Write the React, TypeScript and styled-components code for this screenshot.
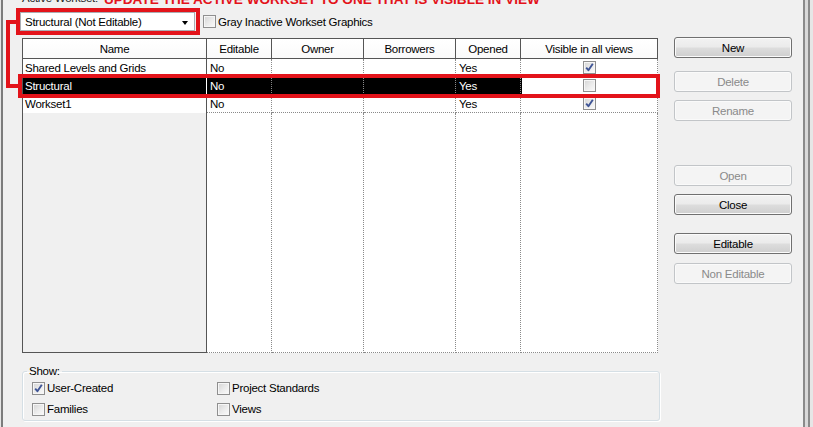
import React from "react";
import styled, { createGlobalStyle } from "styled-components";

const GlobalStyle = createGlobalStyle`
  html, body {
    margin: 0;
    padding: 0;
    background: #f0f0f0;
    overflow: hidden;
  }
  * {
    box-sizing: border-box;
  }
`;

const RED = "#e3131a";

const Screen = styled.div`
  position: relative;
  width: 813px;
  height: 427px;
  overflow: hidden;
  display: flex;
  padding: 0 3px 0 1px;
  background: #e6e6e6;
  font-family: "Liberation Sans", Arial, sans-serif;
  font-size: 11.5px;
  letter-spacing: -0.25px;
  color: #000;
`;

const Frame = styled.div`
  flex: 1;
  display: flex;
  border-right: 2px solid #8a8a8a;
  padding-right: 3px;
  background: #d9d9d9;
`;

const Dialog = styled.div`
  flex: 1;
  display: flex;
  align-items: flex-start;
  gap: 14px;
  padding-left: 19px;
  background: #f0f0f0;
  border-left: 2px solid #7c7c7c;
  border-right: 2px solid #8a8a8a;
`;

const MainColumn = styled.div`
  width: 638px;
  display: flex;
  flex-direction: column;
`;

const TopRow = styled.div`
  display: flex;
  align-items: flex-end;
  gap: 6px;
  height: 14px;
  margin-top: -7px;
`;

const FieldLabel = styled.span`
  line-height: 14px;
  margin-bottom: 2px;
  color: #222;
`;

const Callout = styled.span`
  font-size: 13.6px;
  font-weight: bold;
  letter-spacing: 0;
  line-height: 14px;
  color: ${RED};
  white-space: nowrap;
`;

const ComboRow = styled.div`
  display: flex;
  align-items: center;
  height: 19px;
  margin-top: 5px;
`;

const Combo = styled.div`
  width: 175px;
  height: 19px;
  margin-left: -2px;
  display: flex;
  align-items: center;
  justify-content: space-between;
  padding: 0 6px 0 4px;
  background: #fff;
  border: 1px solid #abadb3;
`;

const Arrow = styled.span`
  width: 0;
  height: 0;
  margin-top: 2px;
  border-left: 3.5px solid transparent;
  border-right: 3.5px solid transparent;
  border-top: 4px solid #000;
`;

const CheckLabel = styled.label<{ $indent?: number }>`
  display: flex;
  align-items: center;
  gap: 2px;
  margin-left: ${(p) => p.$indent ?? 0}px;
  white-space: nowrap;
  line-height: 16px;
`;

const Box = styled.span`
  flex: none;
  width: 13px;
  height: 13px;
  display: inline-flex;
  align-items: center;
  justify-content: center;
  border: 1px solid #8f8f8f;
  background: linear-gradient(135deg, #d4d4d4 0%, #ececec 55%, #fbfbfb 100%);
  box-shadow: inset 0 0 0 1px #f6f6f6;
`;

const CheckBox: React.FC<{ checked?: boolean }> = ({ checked }) => (
  <Box>
    {checked && (
      <svg width="11" height="11" viewBox="0 0 11 11">
        <path
          d="M2.2 5.6 L4.4 8.2 L8.8 1.8"
          fill="none"
          stroke="#3f5596"
          strokeWidth="1.9"
          strokeLinejoin="round"
        />
      </svg>
    )}
  </Box>
);

const Table = styled.div`
  margin-top: 7px;
  width: 636px;
  height: 315px;
  display: grid;
  grid-template-columns: 184px 65px 92px 92px 65px 137px;
  grid-template-rows: 20px repeat(3, 18px) 1fr;
  border-top: 1px solid #555;
  border-left: 1px solid #555;
`;

const HeaderCell = styled.div`
  display: flex;
  align-items: center;
  justify-content: center;
  background: linear-gradient(#ffffff, #fafafa);
  border-right: 1px solid #555;
  border-bottom: 1px solid #555;
`;

const NameCell = styled.div<{ $selected?: boolean }>`
  display: flex;
  align-items: center;
  padding-left: 2px;
  white-space: nowrap;
  background: ${(p) => (p.$selected ? "#000" : "#fff")};
  color: ${(p) => (p.$selected ? "#fff" : "#000")};
  border-right: 1px solid ${(p) => (p.$selected ? "#fff" : "#555")};
`;

const Cell = styled.div<{ $selected?: boolean; $focus?: boolean; $center?: boolean }>`
  display: flex;
  align-items: center;
  justify-content: ${(p) => (p.$center ? "center" : "flex-start")};
  padding-left: ${(p) => (p.$center ? 0 : 3)}px;
  background: ${(p) => (p.$selected ? "#000" : "#fff")};
  color: ${(p) => (p.$selected ? "#fff" : "#000")};
  border-right: 1px dotted #8a8a8a;
  border-bottom: 1px dotted #8a8a8a;
  outline: ${(p) => (p.$focus ? "1px solid #000" : "none")};
  outline-offset: -1px;
`;

const NameFiller = styled.div`
  background: #f0f0f0;
  border-right: 1px solid #555;
  border-bottom: 1px solid #555;
`;

const Filler = styled.div`
  background: #fff;
  border-right: 1px dotted #8a8a8a;
  border-bottom: 1px dotted #8a8a8a;
`;

const GroupBox = styled.fieldset`
  margin: 11px 0 0 0;
  padding: 0 0 3px 4px;
  width: 638px;
  border: 1px solid #d5dfe5;
  border-radius: 3px;
  box-shadow: inset 1px 1px 0 #fff, 1px 1px 0 #fff;
`;

const Legend = styled.legend`
  padding: 0 2px;
  line-height: 14px;
`;

const Options = styled.div`
  display: grid;
  grid-template-columns: 185px 1fr;
  grid-auto-rows: 16px;
  row-gap: 5px;
  margin-top: 2px;
  padding-left: 5px;
`;

const ButtonColumn = styled.div`
  width: 118px;
  display: flex;
  flex-direction: column;
  padding-top: 37px;
`;

const Button = styled.button<{ $gap?: number }>`
  height: 21px;
  margin-top: ${(p) => p.$gap ?? 0}px;
  font-family: inherit;
  font-size: 11.5px;
  letter-spacing: -0.25px;
  color: #000;
  border: 1px solid #707070;
  border-radius: 3px;
  background: linear-gradient(#f2f2f2 0%, #ebebeb 48%, #dddddd 52%, #cfcfcf 100%);
  box-shadow: inset 0 0 0 1px #fbfbfb;
  padding: 0;

  &:disabled {
    color: #8a8a8a;
    border-color: #c2c5c8;
    background: #f4f4f4;
    box-shadow: inset 0 0 0 1px #fafafa;
  }
`;

const Annotations = styled.svg`
  position: absolute;
  left: 0;
  top: 0;
  pointer-events: none;
`;

type Workset = {
  name: string;
  editable: string;
  opened: string;
  visible: boolean;
  selected?: boolean;
};

const worksets: Workset[] = [
  { name: "Shared Levels and Grids", editable: "No", opened: "Yes", visible: true },
  { name: "Structural", editable: "No", opened: "Yes", visible: false, selected: true },
  { name: "Workset1", editable: "No", opened: "Yes", visible: true },
];

const columns = ["Name", "Editable", "Owner", "Borrowers", "Opened", "Visible in all views"];

export default function App() {
  return (
    <>
      <GlobalStyle />
      <Screen>
        <Frame>
          <Dialog>
            <MainColumn>
              <TopRow>
                <FieldLabel>Active Workset:</FieldLabel>
                <Callout>UPDATE THE ACTIVE WORKSET TO ONE THAT IS VISIBLE IN VIEW</Callout>
              </TopRow>
              <ComboRow>
                <Combo>
                  <span>Structural (Not Editable)</span>
                  <Arrow />
                </Combo>
                <CheckLabel $indent={8}>
                  <CheckBox />
                  Gray Inactive Workset Graphics
                </CheckLabel>
              </ComboRow>

              <Table>
                {columns.map((c) => (
                  <HeaderCell key={c}>{c}</HeaderCell>
                ))}
                {worksets.map((w) => (
                  <React.Fragment key={w.name}>
                    <NameCell $selected={w.selected}>{w.name}</NameCell>
                    <Cell $selected={w.selected}>{w.editable}</Cell>
                    <Cell $selected={w.selected} />
                    <Cell $selected={w.selected} />
                    <Cell $selected={w.selected}>{w.opened}</Cell>
                    <Cell $center $focus={w.selected}>
                      <CheckBox checked={w.visible} />
                    </Cell>
                  </React.Fragment>
                ))}
                <NameFiller />
                <Filler />
                <Filler />
                <Filler />
                <Filler />
                <Filler />
              </Table>

              <GroupBox>
                <Legend>Show:</Legend>
                <Options>
                  <CheckLabel>
                    <CheckBox checked />
                    User-Created
                  </CheckLabel>
                  <CheckLabel>
                    <CheckBox />
                    Project Standards
                  </CheckLabel>
                  <CheckLabel>
                    <CheckBox />
                    Families
                  </CheckLabel>
                  <CheckLabel>
                    <CheckBox />
                    Views
                  </CheckLabel>
                </Options>
              </GroupBox>
            </MainColumn>

            <ButtonColumn>
              <Button>New</Button>
              <Button $gap={13} disabled>
                Delete
              </Button>
              <Button $gap={8} disabled>
                Rename
              </Button>
              <Button $gap={44} disabled>
                Open
              </Button>
              <Button $gap={8}>Close</Button>
              <Button $gap={18}>Editable</Button>
              <Button $gap={9} disabled>
                Non Editable
              </Button>
            </ButtonColumn>
          </Dialog>
        </Frame>

        {/* red markup drawn over the dialog */}
        <Annotations width="813" height="427" viewBox="0 0 813 427">
          <g fill="none" stroke={RED} strokeWidth="4" strokeLinejoin="miter">
            <rect x="18" y="10" width="180" height="23" />
            <path d="M16 22 H8 V86 H18" />
            <rect x="20" y="76" width="638" height="20" />
          </g>
        </Annotations>
      </Screen>
    </>
  );
}
